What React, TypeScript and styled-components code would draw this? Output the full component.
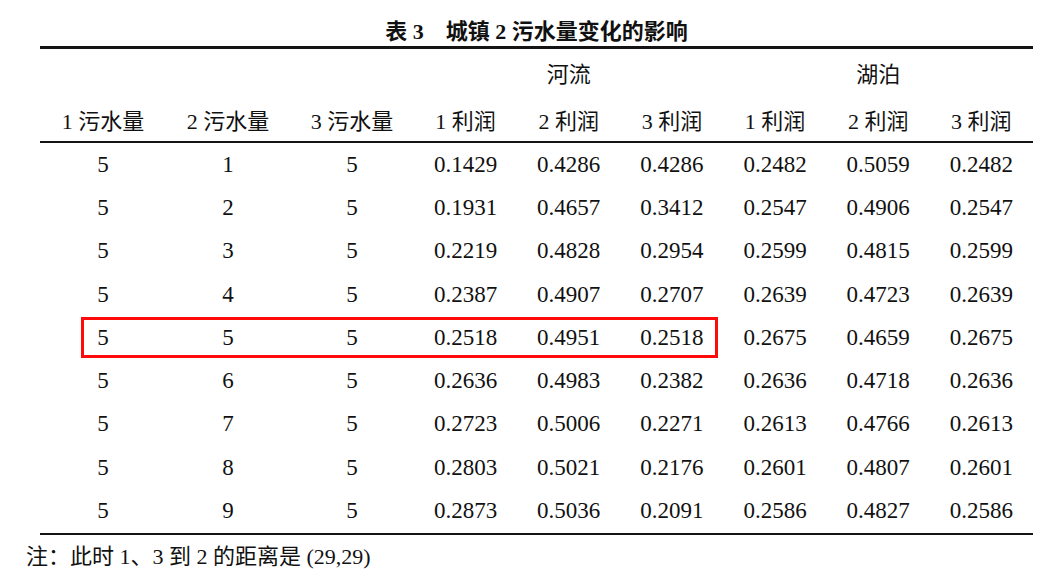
import React from "react";
import styled, { createGlobalStyle } from "styled-components";

const GlobalStyle = createGlobalStyle`
  html, body { margin: 0; padding: 0; background: #ffffff; }
  body {
    font-family: "Liberation Serif", "Noto Sans CJK SC", serif;
    color: #111111;
  }
`;

const COLS = "126px 124px 124px repeat(6, 103.1667px)";

const Page = styled.div`
  width: 1047px;
  height: 581px;
  overflow: hidden;
  background: #ffffff;
`;

const TableWrap = styled.div`
  margin-left: 40px;
  width: 993px;
`;

const Title = styled.h1`
  margin: 18px 0 0;
  height: 28px;
  font-size: 22px;
  line-height: 28px;
  font-weight: 700;
  text-align: center;
  color: #111;
  font-family: "Liberation Serif", "Noto Sans CJK SC", serif;
  white-space: pre;
`;

const Rule = styled.div<{ $w: number }>`
  height: ${(p) => p.$w}px;
  background: #141414;
`;

const GridRow = styled.div<{ $h: number }>`
  position: relative;
  display: grid;
  grid-template-columns: ${COLS};
  align-items: center;
  height: ${(p) => p.$h}px;
`;

const GroupLabel = styled.div<{ $start: number }>`
  grid-column: ${(p) => p.$start} / span 3;
  text-align: center;
  font-size: 22px;
  line-height: 28px;
`;

const HeadCell = styled.div`
  text-align: center;
  font-size: 22px;
  line-height: 28px;
  white-space: pre;
`;

const Cell = styled.div`
  text-align: center;
  font-size: 23px;
  line-height: 28px;
`;

const Highlight = styled.div`
  position: absolute;
  left: 41px;
  top: 1px;
  bottom: 1px;
  width: 637px;
  box-sizing: border-box;
  border: 3px solid #ff0a0a;
  pointer-events: none;
`;

const Note = styled.p`
  margin: 8px 0 0 26px;
  font-size: 22px;
  line-height: 28px;
  white-space: pre;
  color: #111;
`;

const headers = ["1 污水量", "2 污水量", "3 污水量", "1 利润", "2 利润", "3 利润", "1 利润", "2 利润", "3 利润"];

const rows: string[][] = [
  ["5", "1", "5", "0.1429", "0.4286", "0.4286", "0.2482", "0.5059", "0.2482"],
  ["5", "2", "5", "0.1931", "0.4657", "0.3412", "0.2547", "0.4906", "0.2547"],
  ["5", "3", "5", "0.2219", "0.4828", "0.2954", "0.2599", "0.4815", "0.2599"],
  ["5", "4", "5", "0.2387", "0.4907", "0.2707", "0.2639", "0.4723", "0.2639"],
  ["5", "5", "5", "0.2518", "0.4951", "0.2518", "0.2675", "0.4659", "0.2675"],
  ["5", "6", "5", "0.2636", "0.4983", "0.2382", "0.2636", "0.4718", "0.2636"],
  ["5", "7", "5", "0.2723", "0.5006", "0.2271", "0.2613", "0.4766", "0.2613"],
  ["5", "8", "5", "0.2803", "0.5021", "0.2176", "0.2601", "0.4807", "0.2601"],
  ["5", "9", "5", "0.2873", "0.5036", "0.2091", "0.2586", "0.4827", "0.2586"],
];

export default function App() {
  return (
    <Page>
      <GlobalStyle />
      <TableWrap>
        <Title>{"表 3\u2003城镇 2 污水量变化的影响"}</Title>
        <Rule $w={2.5} />
        <GridRow $h={53.5}>
          <GroupLabel $start={4}>河流</GroupLabel>
          <GroupLabel $start={7}>湖泊</GroupLabel>
        </GridRow>
        <GridRow $h={39}>
          {headers.map((h, i) => (
            <HeadCell key={i}>{h}</HeadCell>
          ))}
        </GridRow>
        <Rule $w={2} />
        {rows.map((r, ri) => (
          <GridRow $h={43.3} key={ri}>
            {r.map((v, ci) => (
              <Cell key={ci}>{v}</Cell>
            ))}
            {ri === 4 && <Highlight />}
          </GridRow>
        ))}
        <Rule $w={2.5} />
      </TableWrap>
      <Note>{"注：此时 1、3 到 2 的距离是 (29,29)"}</Note>
    </Page>
  );
}
